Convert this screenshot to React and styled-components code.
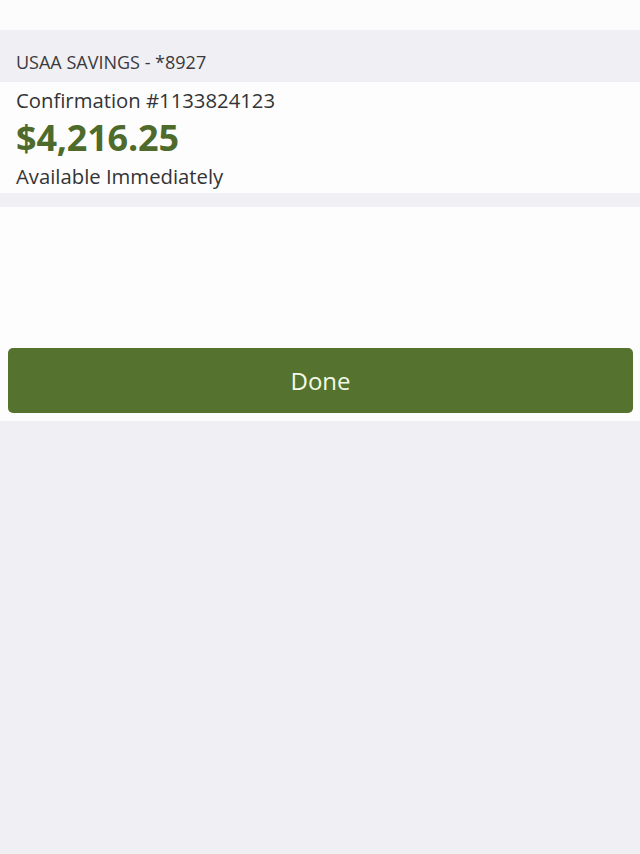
import React from 'react';
import styled, { createGlobalStyle } from 'styled-components';

const GlobalStyle = createGlobalStyle`
  html, body {
    margin: 0;
    padding: 0;
    background: #efeff4;
    font-family: "Open Sans", "Noto Sans", "Liberation Sans", sans-serif;
  }
`;

const Screen = styled.div`
  width: 640px;
  min-height: 854px;
  background: #efeff4;
  display: flex;
  flex-direction: column;
`;

const TopSpacer = styled.div`
  height: 30px;
  background: #fcfcfd;
`;

const SectionHeader = styled.div`
  height: 52px;
  background: #efeff4;
  display: flex;
  align-items: center;
  padding: 12px 16px 0;
  box-sizing: border-box;
  font-size: 18px;
  color: #3a3a3c;
`;

const Card = styled.div`
  background: #fdfdfd;
  padding: 4px 16px 0;
  height: 111px;
  box-sizing: border-box;
  display: flex;
  flex-direction: column;
`;

const Line = styled.div`
  font-size: 20.3px;
  color: #333336;
  line-height: 28px;
`;

const Amount = styled.div`
  font-size: 36px;
  font-weight: 700;
  color: #4e6b2c;
  line-height: 48px;
  letter-spacing: -0.2px;
`;

const Divider = styled.div`
  height: 14px;
  background: #f0f0f4;
`;

const Footer = styled.div`
  background: #fdfdfd;
  padding: 141px 7px 8px 8px;
`;

const DoneButton = styled.button`
  width: 100%;
  height: 65px;
  border: none;
  border-radius: 5px;
  background: #55722f;
  color: #f2f9e4;
  font-family: inherit;
  font-size: 24px;
  cursor: pointer;
  display: flex;
  align-items: center;
  justify-content: center;
`;

export default function App() {
  return (
    <>
      <GlobalStyle />
      <Screen>
        <TopSpacer />
        <SectionHeader>USAA SAVINGS - *8927</SectionHeader>
        <Card>
          <Line>Confirmation #1133824123</Line>
          <Amount>$4,216.25</Amount>
          <Line>Available Immediately</Line>
        </Card>
        <Divider />
        <Footer>
          <DoneButton type="button">Done</DoneButton>
        </Footer>
      </Screen>
    </>
  );
}
